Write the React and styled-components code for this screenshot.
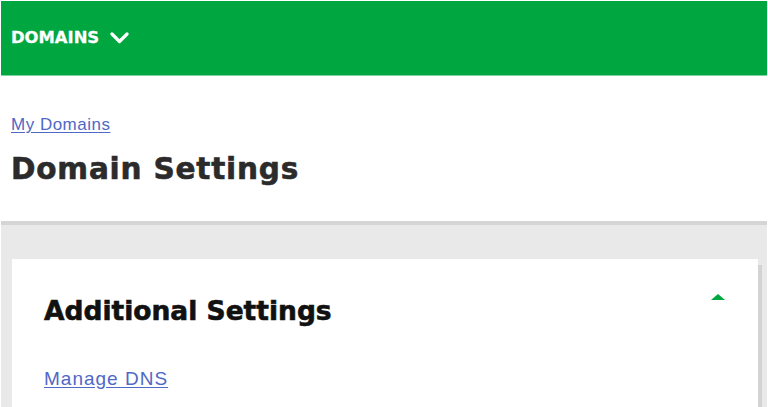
import React from "react";
import styled, { createGlobalStyle } from "styled-components";

const Global = createGlobalStyle`
  html, body { margin: 0; padding: 0; background: #ffffff; }
  body { padding: 1px; font-family: "Liberation Sans", Arial, sans-serif; }
  * { box-sizing: border-box; }
`;

const Page = styled.div`
  display: flex;
  flex-direction: column;
  min-height: 405px;
`;

const TopBar = styled.header`
  height: 75px;
  background: #00a63f;
  border-bottom: 1px solid #7fd19f;
  display: flex;
  align-items: center;
  padding-left: 10px;
  gap: 11px;
`;

const NavLabel = styled.span`
  font-family: "DejaVu Sans", sans-serif;
  font-weight: 700;
  font-size: 16.4px;
  color: #ffffff;
  line-height: 1;
  -webkit-text-stroke: 0.3px #ffffff;
`;

const TitleBlock = styled.section`
  padding: 40px 10px 35px;
  display: flex;
  flex-direction: column;
  align-items: flex-start;
`;

const Link = styled.a`
  font-family: "Liberation Sans", Arial, sans-serif;
  font-size: ${(p) => p.$size}px;
  letter-spacing: ${(p) => p.$spacing}px;
  line-height: 18px;
  color: #5068c6;
  text-decoration: underline;
  text-underline-offset: 2px;
  cursor: pointer;
`;

const PageTitle = styled.h1`
  margin: 18px 0 0;
  font-family: "DejaVu Sans", sans-serif;
  font-weight: 700;
  font-size: 29.5px;
  line-height: 34px;
  letter-spacing: 0.8px;
  color: #2b2b2b;
  -webkit-text-stroke: 0.6px #2b2b2b;
`;

const GrayArea = styled.main`
  flex: 1;
  background: #e9e9e9;
  border-top: 4px solid #d5d5d5;
  padding: 34px 9px 0 11px;
`;

const Card = styled.div`
  background: #ffffff;
  padding: 36px 33px 40px 32px;
  box-shadow: 4px 6px 0 #d3d3d3;
`;

const CardHead = styled.div`
  display: flex;
  justify-content: space-between;
  align-items: flex-start;
`;

const CardTitle = styled.h2`
  margin: 0;
  font-family: "DejaVu Sans", sans-serif;
  font-weight: 700;
  font-size: 26.5px;
  line-height: 32px;
  color: #111111;
  -webkit-text-stroke: 0.6px #111111;
`;

const Caret = styled.span`
  margin-top: -1px;
  width: 0;
  height: 0;
  border-left: 7px solid transparent;
  border-right: 7px solid transparent;
  border-bottom: 6px solid #00a63f;
`;

const CardBody = styled.div`
  margin-top: 43px;
`;

const Chevron = () => (
  <svg width="19" height="12" viewBox="0 0 19 12" fill="none">
    <polyline points="2,2 9.5,9.5 17,2" stroke="#fff" strokeWidth="3.2" strokeLinecap="round" strokeLinejoin="round" />
  </svg>
);

export default function App() {
  return (
    <>
      <Global />
      <Page>
        <TopBar>
          <NavLabel>DOMAINS</NavLabel>
          <Chevron />
        </TopBar>
        <TitleBlock>
          <Link $size={17} $spacing={0.5}>My Domains</Link>
          <PageTitle>Domain Settings</PageTitle>
        </TitleBlock>
        <GrayArea>
          <Card>
            <CardHead>
              <CardTitle>Additional Settings</CardTitle>
              <Caret />
            </CardHead>
            <CardBody>
              <Link $size={19} $spacing={1}>Manage DNS</Link>
            </CardBody>
          </Card>
        </GrayArea>
      </Page>
    </>
  );
}
